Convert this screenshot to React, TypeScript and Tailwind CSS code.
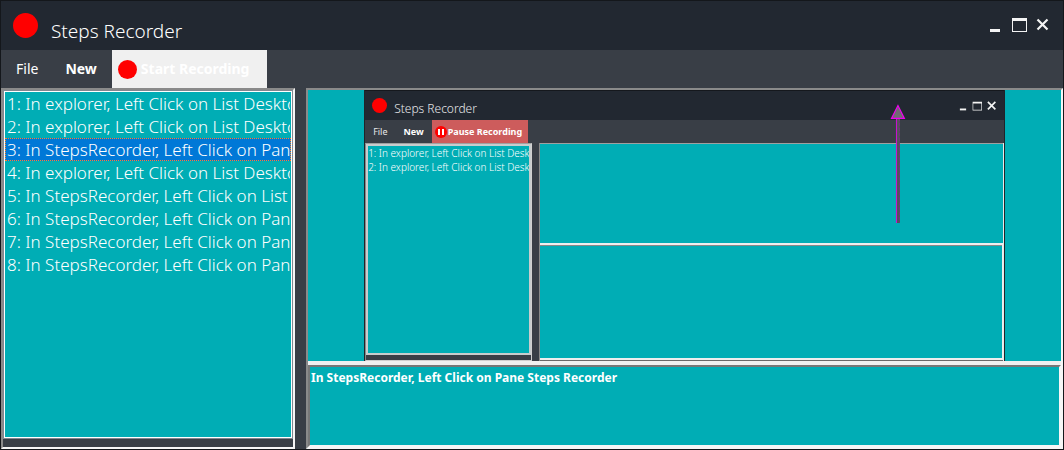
import { useState } from "react"

const steps = [
  "1: In explorer, Left Click on List Desktop",
  "2: In explorer, Left Click on List Desktop",
  "3: In StepsRecorder, Left Click on Pane Steps Recorder",
  "4: In explorer, Left Click on List Desktop",
  "5: In StepsRecorder, Left Click on List",
  "6: In StepsRecorder, Left Click on Pane",
  "7: In StepsRecorder, Left Click on Pane",
  "8: In StepsRecorder, Left Click on Pane",
]

function RecordDot({ className }: { className: string }) {
  return <span className={`rounded-full bg-[#ff0000] shrink-0 ${className}`} />
}

function MinimizeIcon({ className }: { className: string }) {
  return (
    <svg viewBox="0 0 16 16" className={className} aria-hidden="true">
      <path d="M3 12h10v3H3z" fill="#f4f4f4" />
    </svg>
  )
}

function MaximizeIcon({ className }: { className: string }) {
  return (
    <svg viewBox="0 0 16 16" className={className} aria-hidden="true">
      <path d="M1 1h15v14H1zM2 4v10h13V4z" fill="#f4f4f4" fillRule="evenodd" />
    </svg>
  )
}

function CloseIcon({ className }: { className: string }) {
  return (
    <svg viewBox="0 0 16 16" className={className} aria-hidden="true">
      <path d="M2.5 2.5l10 10M12.5 2.5l-10 10" stroke="#f4f4f4" strokeWidth="2.2" fill="none" />
    </svg>
  )
}

function PauseIcon() {
  return (
    <svg viewBox="0 0 12 12" className="size-3 shrink-0" aria-hidden="true">
      <circle cx="6" cy="6" r="6" fill="#ff0000" />
      <path d="M3 3h2v6H3zM7 3h2v6H7z" fill="#fff" />
    </svg>
  )
}

// Arrow that marks where the click happened
function ClickArrow() {
  return (
    <svg viewBox="0 0 16 120" className="absolute left-[82.2%] top-[5.2%] h-[44%]" aria-hidden="true">
      <path d="M7 14h3v106H7z" fill="#55505a" />
      <path d="M6.5 14v106" stroke="#d010d8" strokeWidth="1" />
      <path d="M9.5 14v106" stroke="#7b2c86" strokeWidth="1" strokeDasharray="3 2" />
      <path d="M8 1.5L14.5 14.5h-13z" fill="#706a72" stroke="#f000f0" strokeWidth="1.2" />
    </svg>
  )
}

function Snapshot() {
  return (
    <figure className="relative flex flex-col h-full max-w-full aspect-[1064/450] bg-[#393e46] border-x border-[#20242a] overflow-hidden">
      <div className="flex items-center h-[30px] shrink-0 bg-[#222831] border-t border-[#15181d] pl-[7px] pr-[6px]">
        <RecordDot className="size-[15px]" />
        <span className="pl-[7px] pt-[6px] text-[12px] leading-4 font-light text-[#e8e9eb] grow">Steps Recorder</span>
        <span className="flex items-center gap-1">
          <MinimizeIcon className="size-[10px]" />
          <MaximizeIcon className="size-[10px]" />
          <CloseIcon className="size-[12px]" />
        </span>
      </div>
      <div className="flex h-[23px] shrink-0 text-[9px] leading-3 text-[#e8e8e8]">
        <span className="flex items-center px-2">File</span>
        <span className="flex items-center px-2 font-bold text-white">New</span>
        <span className="flex items-center gap-px pl-[3px] pr-[6px] bg-[#cd5c5c] font-bold text-white">
          <PauseIcon />
          Pause Recording
        </span>
      </div>
      <div className="flex grow min-h-0">
        <div className="w-[26.2%] pb-[5px] border border-t-[#a0a0a0] border-l-[#888888] border-r-[#d0d0d0] border-b-[#d0d0d0]">
          <div className="h-full bg-[#00adb5] border-2 border-[#c8cccd] text-[10px] leading-[14px] font-light text-white overflow-hidden whitespace-nowrap">
            <p>{steps[0]}</p>
            <p>{steps[1]}</p>
          </div>
        </div>
        <div className="flex flex-col grow ml-[7px] border-l border-[#888888] border-r border-r-[#e8e8e8] bg-[#00adb5]">
          <div className="h-[46%] border-t border-[#a0a0a0]" />
          <div className="grow border-t-2 border-b-2 border-r border-[#eeeeee] shadow-[inset_0_1px_0_#888888]" />
          <div className="h-px bg-[#696969]" />
        </div>
      </div>
      <ClickArrow />
    </figure>
  )
}

export default function App() {
  const [selected, setSelected] = useState(2)

  return (
    <div className="flex flex-col h-screen border border-[#14171b] bg-[#393e46] font-['Noto_Sans','Open_Sans',sans-serif] text-white">
      <header className="flex h-[49px] shrink-0 bg-[#222831] pl-3 pr-3">
        <RecordDot className="size-[25px] mt-3" />
        <h1 className="pl-[13px] pt-4 text-[19px] leading-7 font-light grow">Steps Recorder</h1>
        <div className="flex gap-2 pt-4">
          <button type="button" aria-label="Minimize" className="size-4">
            <MinimizeIcon className="size-4" />
          </button>
          <button type="button" aria-label="Maximize" className="size-4">
            <MaximizeIcon className="size-4" />
          </button>
          <button type="button" aria-label="Close" className="size-4">
            <CloseIcon className="size-4" />
          </button>
        </div>
      </header>

      <nav className="flex h-[38px] shrink-0 text-[14px] leading-5">
        <button type="button" className="px-[15px]">File</button>
        <button type="button" className="pl-3 pr-[15px] font-bold">New</button>
        <button type="button" className="flex items-center gap-1 pl-[6px] pr-[18px] bg-[#f0f0f0] font-bold">
          <RecordDot className="size-[19px]" />
          Start Recording
        </button>
      </nav>

      <main className="flex grow min-h-0 gap-[11px]">
        <section className="w-[294px] shrink-0 pb-2 border-2 border-t-[#8a8a8a] border-l-[#8a8a8a] border-r-[#f6f6f6] border-b-[#f6f6f6]">
          <div className="h-full border border-[#828790]">
            <ul className="h-full border border-white bg-[#00adb5] overflow-hidden">
              {steps.map((step, index) => (
                <li key={index}>
                  <button
                    type="button"
                    onClick={() => setSelected(index)}
                    className={`block w-full h-[23px] pl-px border border-dotted text-left text-[17px] leading-5 font-light whitespace-nowrap overflow-hidden ${
                      index === selected ? "bg-[#0078d7] border-[#ff8728]" : "border-transparent"
                    }`}
                  >
                    {step}
                  </button>
                </li>
              ))}
            </ul>
          </div>
        </section>

        <section className="flex flex-col grow min-w-0 border-2 border-t-[#8a8a8a] border-l-[#8a8a8a] border-r-[#f6f6f6] border-b-[#f6f6f6]">
          <div className="flex justify-center grow min-h-0 bg-[#00adb5]">
            <Snapshot />
          </div>
          <div className="h-1 shrink-0 bg-[#f0f0f0]" />
          <textarea
            aria-label="Step description"
            defaultValue="In StepsRecorder, Left Click on Pane Steps Recorder"
            className="block w-full h-[82px] shrink-0 resize-none outline-none px-px py-px bg-[#00adb5] border-2 border-t-[#777777] border-l-[#777777] border-r-[#f6f6f6] border-b-[#f6f6f6] text-[12px] leading-5 font-bold"
          />
        </section>
      </main>
    </div>
  )
}
